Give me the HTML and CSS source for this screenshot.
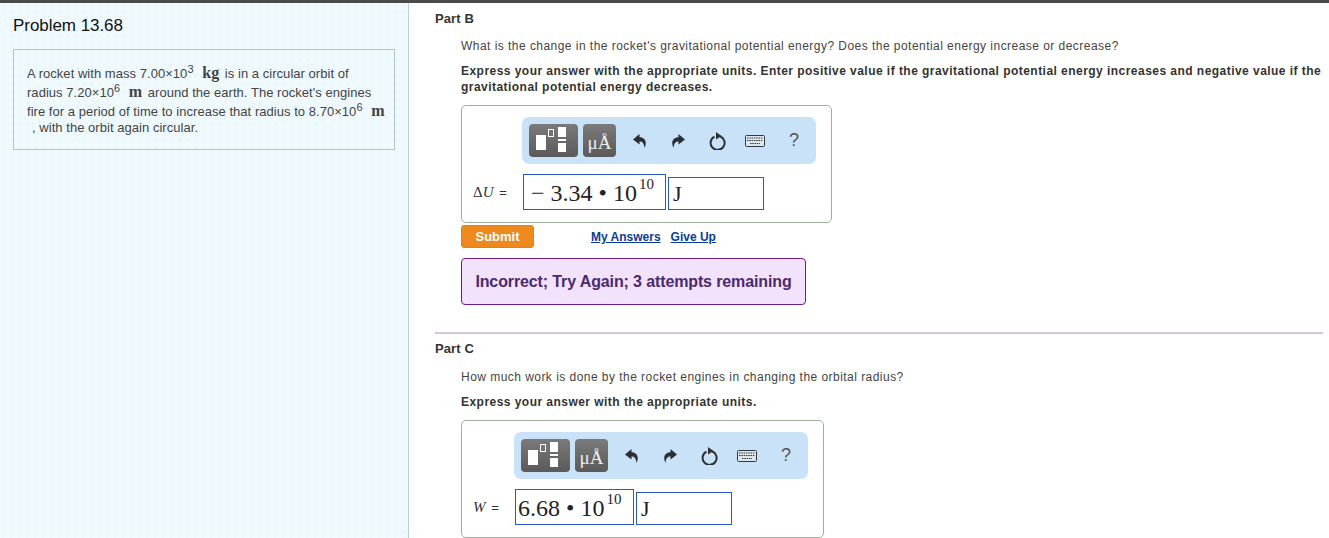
FILE: index.html
```html
<!DOCTYPE html>
<html lang="en">
<head>
  <meta charset="UTF-8">
  <title>Problem 13.68</title>
  <link rel="stylesheet" href="styles.css">
</head>

<body>
  <svg class="icon-defs" width="0" height="0">
    <symbol id="i-template" viewBox="0 0 49 33">
      <rect x="7" y="11" width="10" height="15" fill="#fff"/>
      <rect x="19.500" y="5.500" width="5" height="7" fill="none" stroke="#fff"/>
      <rect x="29" y="3" width="8" height="10" fill="#fff"/>
      <rect x="29" y="15" width="8" height="2" fill="#fff"/>
      <rect x="29" y="19" width="8" height="9" fill="#fff"/>
    </symbol>
    <symbol id="i-undo" viewBox="0 0 14 14">
      <path d="M6.500 0 0 5.500 6.500 10.500V7.500C9.500 7.500 11 9 11.500 14 14.500 8 12 3.200 6.500 3.200Z" fill="#2b2f33"/>
    </symbol>
    <symbol id="i-redo" viewBox="0 0 14 14">
      <path d="M7.500 0 14 5.500 7.500 10.500V7.500C4.500 7.500 3 9 2.500 14-.5 8 2 3.200 7.500 3.200Z" fill="#2b2f33"/>
    </symbol>
    <symbol id="i-reset" viewBox="0 0 17 18">
      <path d="M5.500 4.600A7 7 0 1 0 11 4.300" fill="none" stroke="#2b2f33" stroke-width="2"/>
      <path d="M7 0 12.500 4 7 7.500Z" fill="#2b2f33"/>
    </symbol>
    <symbol id="i-keyboard" viewBox="0 0 20 12">
      <rect x="0.500" y="0.500" width="19" height="11" rx="1" fill="#dfe6ea" stroke="#2f3a40"/>
      <path d="M2 3H18M2 5.500H18M5 8.500H15" stroke="#2f3a40" stroke-width="1.200" stroke-dasharray="1.500 .8"/>
    </symbol>
  </svg>

  <div class="top-bar"></div>

  <div class="page">
    <div class="side">
      <h1 class="problem-title">Problem 13.68</h1>
      <div class="intro">
        A rocket with mass 7.00×10<sup>3</sup> <span class="unit">kg</span> is in a circular orbit of<br>
        radius 7.20×10<sup>6</sup> <span class="unit">m</span> around the earth. The rocket's engines<br>
        fire for a period of time to increase that radius to 8.70×10<sup>6</sup> <span class="unit">m</span>
        <span class="tail">, with the orbit again circular.</span>
      </div>
    </div>

    <div class="main">
      <section class="part part-b">
        <h2 class="part-title">Part B</h2>
        <div class="part-body">
          <p class="question">What is the change in the rocket's gravitational potential energy? Does the potential energy increase or decrease?</p>
          <p class="instructions">Express your answer with the appropriate units. Enter positive value if the gravitational potential energy increases and negative value if the gravitational potential energy decreases.</p>

          <div class="answer answer-b">
            <div class="toolbar">
              <span class="tool-btn tool-template"><svg width="49" height="33"><use href="#i-template"/></svg></span>
              <span class="tool-btn tool-units">μÅ</span>
              <span class="tool-icons">
                <svg width="14" height="14"><use href="#i-undo"/></svg>
                <svg width="14" height="14"><use href="#i-redo"/></svg>
                <svg width="17" height="18"><use href="#i-reset"/></svg>
                <svg class="tool-keys" width="20" height="12"><use href="#i-keyboard"/></svg>
                <span class="tool-help">?</span>
              </span>
            </div>
            <div class="entry">
              <span class="entry-label"><span class="delta">Δ</span><i>U</i> <span class="eq">=</span></span>
              <span class="math-box">− 3.34 • 10<sup>10</sup></span>
              <span class="unit-box">J</span>
            </div>
          </div>

          <div class="actions">
            <a class="submit">Submit</a>
            <span class="links"><a>My Answers</a><a>Give Up</a></span>
          </div>

          <div class="feedback">Incorrect; Try Again; 3 attempts remaining</div>
        </div>
      </section>

      <section class="part part-c">
        <h2 class="part-title">Part C</h2>
        <div class="part-body">
          <p class="question">How much work is done by the rocket engines in changing the orbital radius?</p>
          <p class="instructions">Express your answer with the appropriate units.</p>

          <div class="answer answer-c">
            <div class="toolbar">
              <span class="tool-btn tool-template"><svg width="49" height="33"><use href="#i-template"/></svg></span>
              <span class="tool-btn tool-units">μÅ</span>
              <span class="tool-icons">
                <svg width="14" height="14"><use href="#i-undo"/></svg>
                <svg width="14" height="14"><use href="#i-redo"/></svg>
                <svg width="17" height="18"><use href="#i-reset"/></svg>
                <svg class="tool-keys" width="20" height="12"><use href="#i-keyboard"/></svg>
                <span class="tool-help">?</span>
              </span>
            </div>
            <div class="entry">
              <span class="entry-label"><i>W</i> <span class="eq">=</span></span>
              <span class="math-box">6.68 • 10<sup>10</sup></span>
              <span class="unit-box">J</span>
            </div>
          </div>
        </div>
      </section>
    </div>
  </div>
</body>
</html>
```

FILE: styles.css
```css
* {
  box-sizing: border-box;
}

html, body {
  height: 100%;
}

body {
  margin: 0;
  overflow: hidden;
  font-family: "Liberation Sans", Arial, sans-serif;
  font-size: 12px;
  color: #333;
  background: #fff;
}

.icon-defs {
  position: absolute;
}

.top-bar {
  height: 3px;
  background: #4a4a4a;
}

.page {
  display: flex;
  height: 535px;
}

/* left column */
.side {
  width: 409px;
  flex: none;
  padding: 13px 13px 0;
  background: repeating-conic-gradient(#e9f3fa 0 25%, #fcfeff 0 50%) 0 0 / 2px 2px;
  border-right: 1px solid #b5d3e8;
}

.problem-title {
  margin: 0;
  font-size: 17px;
  font-weight: normal;
  line-height: 19px;
  letter-spacing: -0.05px;
  color: #111;
}

.intro {
  width: 382px;
  height: 101px;
  margin-top: 14px;
  padding: 14px 0 0 13px;
  font-size: 13px;
  line-height: 19px;
  letter-spacing: 0.04px;
  color: #444;
  white-space: nowrap;
  border: 1px solid #afc6d6;
}

.intro sup {
  font-size: 11px;
  line-height: 0;
}

.unit {
  margin: 0 2px 0 5px;
  font-family: "Liberation Serif", serif;
  font-size: 16px;
  font-weight: bold;
  line-height: 0;
  color: #444;
}

.tail {
  display: block;
  margin-left: 5px;
  line-height: 14px;
}

/* right column */
.main {
  flex: 1;
  padding: 8px 6px 0 26px;
}

.part-title {
  margin: 0;
  font-size: 13px;
  line-height: 15px;
  letter-spacing: 0.1px;
  color: #333;
}

.part-body {
  padding-left: 26px;
}

.part-c {
  margin-top: 27px;
  padding-top: 7px;
  border-top: 2px solid #d6c8d6;
}

.question {
  margin: 12px 0 0;
  font-size: 12px;
  line-height: 16px;
  letter-spacing: 0.46px;
  color: #444;
}

.part-c .question {
  margin-top: 13px;
}

.instructions {
  margin: 9px -6px 0 0;
  font-size: 12px;
  font-weight: bold;
  line-height: 16px;
  letter-spacing: 0.46px;
  color: #333;
}

.answer {
  height: 118px;
  margin-top: 10px;
  padding-top: 11px;
  background: #fff;
  border: 1px solid #9eb0a0;
  border-radius: 5px;
}

.answer-b {
  width: 371px;
}

.answer-c {
  width: 363px;
}

.toolbar {
  display: flex;
  align-items: center;
  width: 294px;
  height: 47px;
  padding-left: 7px;
  background: #c9e2f8;
  border-radius: 7px;
}

.answer-b .toolbar {
  margin-left: 60px;
}

.answer-c .toolbar {
  margin-left: 52px;
}

.tool-btn {
  display: block;
  height: 33px;
  background: linear-gradient(#7a7a7a, #5a5a5a);
  border-radius: 4px;
}

.tool-template {
  width: 49px;
}

.tool-template svg {
  display: block;
}

.tool-units {
  width: 33px;
  margin-left: 5px;
  font-family: "Liberation Serif", serif;
  font-size: 19px;
  line-height: 37px;
  text-align: center;
  color: #eee;
}

.tool-icons {
  display: flex;
  align-items: center;
  gap: 24px;
  margin-left: 17px;
}

.tool-keys {
  margin-left: -5px;
}

.tool-help {
  font-size: 18px;
  color: #555;
}

.entry {
  display: flex;
  align-items: flex-end;
  margin-top: 10px;
}

.entry-label {
  align-self: center;
  margin-left: 11px;
  font-family: "Liberation Serif", serif;
  font-size: 15px;
  color: #333;
}

.answer-b .entry-label {
  width: 50px;
}

.answer-c .entry-label {
  width: 42px;
}

.eq {
  margin-left: 2px;
  font-family: "Liberation Sans", sans-serif;
  font-size: 13px;
}

.math-box {
  height: 36px;
  padding: 0 7px;
  font-family: "Liberation Serif", serif;
  font-size: 24px;
  line-height: 37px;
  color: #222;
  white-space: nowrap;
  border: 1px solid #2a58c8;
}

.answer-b .math-box {
  width: 143px;
}

.answer-c .math-box {
  width: 119px;
  padding: 0 2px;
}

.math-box sup {
  font-size: 15px;
  line-height: 0;
  vertical-align: 12px;
  margin-left: 2px;
}

.unit-box {
  width: 96px;
  height: 33px;
  margin-left: 2px;
  padding-left: 4px;
  font-family: "Liberation Serif", serif;
  font-size: 22px;
  line-height: 31px;
  color: #222;
  border: 1px solid #2a58c8;
}

.actions {
  display: flex;
  align-items: center;
  height: 23px;
  margin-top: 2px;
}

.submit {
  width: 73px;
  height: 23px;
  font-size: 13px;
  font-weight: bold;
  line-height: 21px;
  text-align: center;
  color: #fff;
  background: #ee8a1d;
  border: 1px solid #d9851e;
  border-radius: 3px;
}

.links {
  display: flex;
  gap: 10px;
  margin-left: 57px;
  padding-top: 1px;
  font-size: 12px;
  font-weight: bold;
}

.links a {
  color: #0a3c96;
  text-decoration: underline;
}

.feedback {
  width: 345px;
  height: 47px;
  margin-top: 10px;
  font-size: 16px;
  font-weight: bold;
  line-height: 45px;
  letter-spacing: -0.12px;
  text-align: center;
  color: #4a2a6e;
  background: #f2e2fb;
  border: 1px solid #6a1f8a;
  border-radius: 4px;
}
```
